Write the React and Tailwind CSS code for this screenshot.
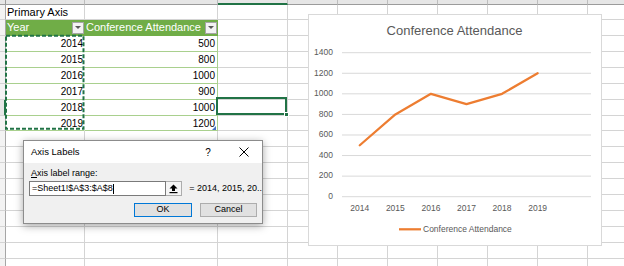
import React from 'react';

const EXTRA = ['d', 'e', 'f', 'g', 'h', 'i', 'j'];

const data = [
    ['2014', '500'],
    ['2015', '800'],
    ['2016', '1000'],
    ['2017', '900'],
    ['2018', '1000'],
    ['2019', '1200'],
];

const Cell = ({ w, line = 'border-[#D4D4D4]', className = '', children }) => (
    <div className={`${w} h-full shrink-0 border-r border-b ${line} ${className}`}>{children}</div>
);

const FilterButton = () => (
    <div className="ml-auto w-[12px] h-[12px] bg-[#F3F3F3] border border-[#A6A6A6] flex items-center justify-center">
        <div className="w-0 h-0 border-l-[3px] border-r-[3px] border-t-[3px] border-l-transparent border-r-transparent border-t-[#595959]" />
    </div>
);

const Row = ({ h, strip, a, b, c }) => (
    <div className={`flex ${h}`}>
        {strip || <Cell w="w-[6px]" line="border-r-[#A6A6A6] border-b-[#D4D4D4]" className="bg-[#F3F3F3]" />}
        {a || <Cell w="w-[79px]" />}
        {b || <Cell w="w-[133px]" />}
        {c || <Cell w="w-[70px]" />}
        {EXTRA.map((k) => <Cell key={k} w="w-[50px]" />)}
    </div>
);

const ColumnStrip = () => (
    <div className="flex h-[5px]">
        <div className="w-[6px] shrink-0 bg-[#E6E6E6] border-r border-b border-[#9B9B9B]" />
        <div className="w-[79px] shrink-0 bg-[#E6E6E6] border-r border-r-[#BDBDBD] border-b border-b-[#9B9B9B]" />
        <div className="w-[133px] shrink-0 bg-[#E6E6E6] border-r border-r-[#BDBDBD] border-b border-b-[#9B9B9B]" />
        <div className="w-[70px] shrink-0 bg-[#E6E6E6] border-r border-r-[#BDBDBD] border-b-2 border-b-[#217346]" />
        {EXTRA.map((k) => (
            <div key={k} className="w-[50px] shrink-0 bg-[#E6E6E6] border-r border-r-[#BDBDBD] border-b border-b-[#9B9B9B]" />
        ))}
    </div>
);

const Chart = () => {
    const y = (v) => 181.7 - v * 0.102857;
    const x = (i) => 33 + 35.57 * (i + 0.5);
    const ticks = [0, 200, 400, 600, 800, 1000, 1200, 1400];
    const points = data.map(([, v], i) => `${x(i)},${y(Number(v))}`).join(' ');
    const font = 'Liberation Sans, Arial, sans-serif';

    return (
        <div className="absolute left-[308px] top-[14px] w-[294px] h-[232px] bg-white border border-[#D9D9D9]">
            <svg width="292" height="230" viewBox="0 0 292 230">
                <text x="145.5" y="17" textAnchor="middle" dominantBaseline="middle" fontFamily={font} fontSize="13" fill="#595959">
                    Conference Attendance
                </text>
                {ticks.map((t) => (
                    <g key={t}>
                        <line x1="33" x2="282" y1={y(t)} y2={y(t)} stroke="#D9D9D9" strokeWidth="1" />
                        <text x="24" y={y(t)} textAnchor="end" dominantBaseline="middle" fontFamily={font} fontSize="8.5" fill="#595959">
                            {t}
                        </text>
                    </g>
                ))}
                {data.map(([yr], i) => (
                    <text key={yr} x={x(i)} y="194" textAnchor="middle" dominantBaseline="middle" fontFamily={font} fontSize="8.5" fill="#595959">
                        {yr}
                    </text>
                ))}
                <polyline points={points} fill="none" stroke="#ED7D31" strokeWidth="2.25" strokeLinejoin="round" strokeLinecap="round" />
                <line x1="90" x2="112" y1="214.3" y2="214.3" stroke="#ED7D31" strokeWidth="2.25" />
                <text x="114" y="214.3" dominantBaseline="middle" fontFamily={font} fontSize="8.5" fill="#595959">
                    Conference Attendance
                </text>
            </svg>
        </div>
    );
};

const AxisDialog = () => (
    <div className="absolute left-[23px] top-[140px] w-[240px] h-[84px] flex flex-col border border-[#8C8C8C] bg-[#F0F0F0] shadow-[0_2px_8px_rgba(0,0,0,0.35)] text-[9px] text-black">
        <div className="h-[22px] bg-white flex items-center">
            <span className="pl-[7px] text-[9.5px]">Axis Labels</span>
            <span className="ml-auto w-[36px] text-center text-[10px]">?</span>
            <span className="w-[36px] flex justify-center">
                <svg width="10" height="10" viewBox="0 0 10 10">
                    <path d="M0.5 0.5 L9.5 9.5 M9.5 0.5 L0.5 9.5" stroke="#000" strokeWidth="1" />
                </svg>
            </span>
        </div>
        <div className="h-[14px] mt-[4px] pl-[7px] flex items-center">
            <span><span className="underline">A</span>xis label range:</span>
        </div>
        <div className="h-[15px] pl-[5px] flex items-center">
            <div className="w-[140px] h-full bg-white border border-[#7A7A7A] flex items-center pl-[2px]">
                <span>=Sheet1!$A$3:$A$8</span>
                <span className="w-[1px] h-[10px] bg-black" />
            </div>
            <div className="w-[17px] h-full bg-[#F5F5F5] border border-[#ADADAD] border-l-0 flex items-center justify-center">
                <svg width="9" height="10" viewBox="0 0 9 10">
                    <polygon points="4.5,0.5 0.5,4.5 3,4.5 3,7 6,7 6,4.5 8.5,4.5" fill="#000" />
                    <rect x="0.5" y="8" width="8" height="1.2" fill="#000" />
                </svg>
            </div>
            <span className="ml-[7px] whitespace-nowrap">= 2014, 2015, 20..</span>
        </div>
        <div className="h-[14px] mt-[7px] pr-[5px] flex justify-end gap-[8px]">
            <div className="w-[58px] h-full bg-[#E1E1E1] border border-[#0078D7] flex items-center justify-center">OK</div>
            <div className="w-[57px] h-full bg-[#E1E1E1] border border-[#ADADAD] flex items-center justify-center">Cancel</div>
        </div>
    </div>
);

export default function App() {
    return (
        <div className="relative w-[624px] h-[266px] overflow-hidden bg-white font-['Liberation_Sans',Arial,sans-serif] text-[11px] text-black">
            <ColumnStrip />
            <Row
                h="h-[15px]"
                a={<Cell w="w-[79px]" className="flex items-center pl-[1px] whitespace-nowrap">Primary Axis</Cell>}
            />
            <Row
                h="h-[16px]"
                a={
                    <Cell w="w-[79px]" line="border-[#70AD47]" className="bg-[#70AD47] text-white flex items-center pl-[1px]">
                        <span>Year</span>
                        <FilterButton />
                    </Cell>
                }
                b={
                    <Cell w="w-[133px]" line="border-[#70AD47]" className="bg-[#70AD47] text-white flex items-center pl-[1px]">
                        <span className="whitespace-nowrap">Conference Attendance</span>
                        <FilterButton />
                    </Cell>
                }
            />
            {data.map(([yr, val], i) => (
                <Row
                    key={yr}
                    h={i === 5 ? 'h-[15px]' : 'h-[16px]'}
                    strip={
                        i === 4 ? (
                            <Cell w="w-[6px]" line="border-b-[#D4D4D4] border-r-[#217346]" className="bg-[#E6E6E6] border-r-2" />
                        ) : null
                    }
                    a={
                        <Cell w="w-[79px]" line="border-r-white border-b-[#A9D08E]" className="flex items-center justify-end pr-[1px] text-[10px]">
                            {yr}
                        </Cell>
                    }
                    b={
                        <Cell w="w-[133px]" line="border-[#A9D08E]" className="flex items-center justify-end pr-[2px] text-[10px]">
                            {val}
                        </Cell>
                    }
                />
            ))}
            {[0, 1, 2, 3, 4, 5, 6, 7, 8].map((k) => (
                <Row key={k} h="h-[16px]" />
            ))}

            {/* copy marquee round A3:A8 */}
            <svg className="absolute left-[5px] top-[34px]" width="80" height="96">
                <rect x="1" y="1.7" width="77.5" height="93" fill="none" stroke="#217346" strokeWidth="2" strokeDasharray="4 2" />
            </svg>

            {/* active cell C7 */}
            <div className="absolute left-[216px] top-[97px] w-[71px] h-[18px] border-2 border-[#217346]" />
            <div className="absolute left-[284px] top-[112px] w-[5px] h-[5px] bg-[#217346] border border-white" />

            {/* table resize handle */}
            <svg className="absolute left-[212px] top-[126px]" width="4" height="4">
                <polygon points="4,0 4,4 0,4" fill="#4472C4" />
            </svg>

            <Chart />
            <AxisDialog />
        </div>
    );
}
